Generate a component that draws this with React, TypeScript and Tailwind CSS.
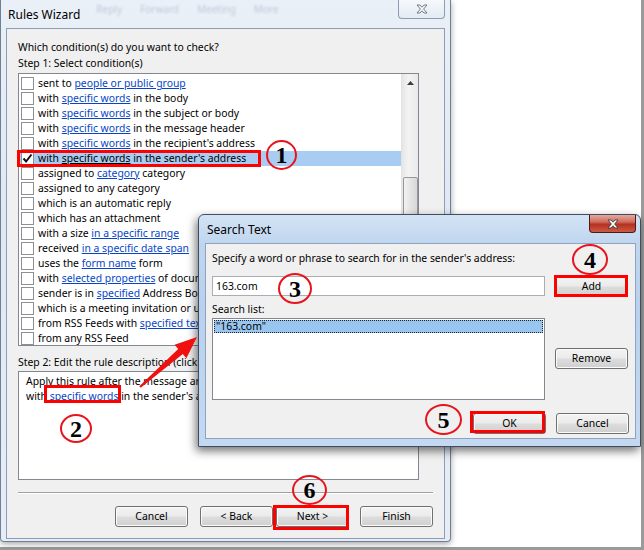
import React from "react";

type Seg = { t: string; link?: boolean };

const conditions: { segs: Seg[]; checked?: boolean }[] = [
  { segs: [{ t: "sent to " }, { t: "people or public group", link: true }] },
  { segs: [{ t: "with " }, { t: "specific words", link: true }, { t: " in the body" }] },
  { segs: [{ t: "with " }, { t: "specific words", link: true }, { t: " in the subject or body" }] },
  { segs: [{ t: "with " }, { t: "specific words", link: true }, { t: " in the message header" }] },
  { segs: [{ t: "with " }, { t: "specific words", link: true }, { t: " in the recipient's address" }] },
  { segs: [{ t: "with " }, { t: "specific words", link: true }, { t: " in the sender's address" }], checked: true },
  { segs: [{ t: "assigned to " }, { t: "category", link: true }, { t: " category" }] },
  { segs: [{ t: "assigned to any category" }] },
  { segs: [{ t: "which is an automatic reply" }] },
  { segs: [{ t: "which has an attachment" }] },
  { segs: [{ t: "with a size " }, { t: "in a specific range", link: true }] },
  { segs: [{ t: "received " }, { t: "in a specific date span", link: true }] },
  { segs: [{ t: "uses the " }, { t: "form name", link: true }, { t: " form" }] },
  { segs: [{ t: "with " }, { t: "selected properties", link: true }, { t: " of documents or forms" }] },
  { segs: [{ t: "sender is in " }, { t: "specified", link: true }, { t: " Address Book" }] },
  { segs: [{ t: "which is a meeting invitation or update" }] },
  { segs: [{ t: "from RSS Feeds with " }, { t: "specified text", link: true }, { t: " in the title" }] },
  { segs: [{ t: "from any RSS Feed" }] },
];

function Btn({ label, className = "" }: { label: string; className?: string }) {
  return (
    <div
      className={`h-[21px] w-[73px] shrink-0 rounded-[3px] border border-[#707070] bg-[linear-gradient(#f3f3f3_0%,#ebebeb_48%,#dddddd_52%,#cfcfcf_100%)] shadow-[inset_0_0_0_1px_#fbfbfb] flex items-center justify-center text-black ${className}`}
    >
      {label}
    </div>
  );
}

function CloseGlyph({ fill, stroke }: { fill: string; stroke: string }) {
  return (
    <svg width="12" height="10" viewBox="0 0 12 10">
      <path
        d="M1 1h3l2 2.2L8 1h3L7.6 5 11 9H8L6 6.8 4 9H1l3.4-4z"
        fill={fill}
        stroke={stroke}
        strokeWidth="0.9"
        strokeLinejoin="round"
      />
    </svg>
  );
}

function Circle({ n, className }: { n: string; className: string }) {
  return (
    <div
      className={`absolute rounded-[50%] border-2 border-[#e8141c] flex items-center justify-center font-['Liberation_Serif',serif] text-[24px] font-semibold text-black leading-none ${className}`}
    >
      {n}
    </div>
  );
}

function Box({ className }: { className: string }) {
  return <div className={`absolute border-[3px] border-[#ff0000] ${className}`} />;
}

function Check() {
  return (
    <svg width="11" height="11" viewBox="0 0 11 11">
      <path d="M1.5 5.5l2.6 3L9.5 1.5" fill="none" stroke="#111" strokeWidth="2" />
    </svg>
  );
}

function RulesWizard() {
  return (
    <div className="w-[451px] h-[542px] flex flex-col bg-[linear-gradient(180deg,#eaf0f7_0%,#dfe8f3_40%,#e6edf6_100%)] border-l border-b border-r border-[#6f7f94] rounded-b-[4px] shadow-[0_2px_6px_rgba(0,0,0,0.35)]">
      {/* title bar */}
      <div className="h-[28px] flex items-start shrink-0">
        <div className="pl-[7px] pt-[6px] text-[12px] text-black">Rules Wizard</div>
        <div className="flex gap-[18px] pl-[16px] pt-[2px] text-[10px] text-[#aab9cf] blur-[1px] opacity-70">
          <span>Reply</span>
          <span>Forward</span>
          <span>Meeting</span>
          <span>More</span>
        </div>
        <div className="ml-auto mr-[5px] w-[47px] h-[19px] rounded-b-[4px] border border-t-0 border-[#8d9cb1] bg-[linear-gradient(#f6f9fc,#e3eaf3)] flex items-center justify-center">
          <CloseGlyph fill="#f4f6f8" stroke="#6a6f77" />
        </div>
      </div>
      {/* client area */}
      <div className="flex-1 mx-[5px] mb-[2px] border border-[#8d9db3] bg-[#f0f0f0] flex flex-col pl-[11px] pt-[10px]">
        <div className="h-[16px] leading-[16px]">Which condition(s) do you want to check?</div>
        <div className="h-[16px] leading-[16px]">Step 1: Select condition(s)</div>
        <div className="mt-[2px] w-[401px] h-[273px] border border-[#828790] bg-white flex overflow-hidden">
          <div className="w-[382px] pt-[2px] flex flex-col">
            {conditions.map((c, i) => (
              <div
                key={i}
                className={`h-[15px] shrink-0 flex items-center pl-[2px] whitespace-nowrap ${c.checked ? "bg-[#a9cdf2]" : ""}`}
              >
                <div className="w-[13px] h-[13px] border border-[#8e8f8f] bg-white flex items-center justify-center shrink-0">
                  {c.checked && <Check />}
                </div>
                <div className="ml-[4px] leading-[15px]">
                  {c.segs.map((s, j) =>
                    s.link ? (
                      <span key={j} className={`underline ${c.checked ? "text-black" : "text-[#0645c8]"}`}>
                        {s.t}
                      </span>
                    ) : (
                      <span key={j}>{s.t}</span>
                    )
                  )}
                </div>
              </div>
            ))}
          </div>
          {/* scrollbar */}
          <div className="w-[17px] ml-auto border-l border-[#e2e2e2] bg-[linear-gradient(90deg,#e6e6e6,#f3f3f3_40%,#eaeaea)] flex flex-col items-center">
            <div className="h-[17px] w-full flex items-center justify-center">
              <svg width="7" height="4" viewBox="0 0 7 4">
                <path d="M0 4L3.5 0L7 4z" fill="#3c3c3c" />
              </svg>
            </div>
            <div className="mt-[86px] w-[15px] h-[60px] rounded-[2px] border border-[#979797] bg-[linear-gradient(90deg,#f3f3f3,#e4e4e4_50%,#d7d7d7)]" />
          </div>
        </div>
        <div className="mt-[8px] h-[16px] leading-[16px] whitespace-nowrap">
          Step 2: Edit the rule description (click an underlined value)
        </div>
        <div className="mt-[1px] w-[401px] h-[109px] border border-[#828790] bg-white pl-[7px] pt-[2px]">
          <div className="h-[15px] leading-[15px]">Apply this rule after the message arrives</div>
          <div className="h-[15px] leading-[15px]">
            with <span className="underline text-[#0645c8]">specific words</span> in the sender's address
          </div>
        </div>
        <div className="mt-[12px] w-[415px] h-[2px] border-t border-[#a0a0a0] border-b border-b-white" />
        <div className="mt-[12px] flex">
          <Btn label="Cancel" className="ml-[97px]" />
          <Btn label="< Back" className="ml-[12px]" />
          <Btn label="Next >" className="ml-[3px]" />
          <Btn label="Finish" className="ml-[11px]" />
        </div>
      </div>
    </div>
  );
}

function SearchDialog() {
  return (
    <div className="absolute left-[198px] top-[214px] w-[443px] h-[233px] flex flex-col rounded-t-[6px] border border-[#3e4e62] bg-[linear-gradient(180deg,#d3e3f5_0%,#c0d6ef_12%,#b9d1ee_40%,#c4d9f1_100%)] shadow-[-2px_4px_10px_rgba(0,0,0,0.55)]">
      <div className="h-[28px] flex items-start shrink-0">
        <div className="pl-[8px] pt-[6px] text-[12px] text-black">Search Text</div>
        <div className="ml-auto mr-[4px] w-[47px] h-[18px] rounded-b-[4px] border border-t-0 border-[#4b1a14] bg-[linear-gradient(#e6a89e_0%,#cf6e5e_40%,#b6321f_55%,#c95a44_100%)] flex items-center justify-center">
          <CloseGlyph fill="#ffffff" stroke="#3b3b3b" />
        </div>
      </div>
      <div className="flex-1 ml-[6px] mr-[4px] mb-[7px] border border-[#8ea3bd] bg-[#f0f0f0] pl-[6px] pt-[6px] flex flex-col">
        <div className="h-[16px] leading-[16px] whitespace-nowrap">
          Specify a word or phrase to search for in the sender's address:
        </div>
        <div className="mt-[10px] flex">
          <div className="w-[333px] h-[20px] border border-[#abadb3] bg-white pl-[3px] leading-[18px]">163.com</div>
          <Btn label="Add" className="ml-[10px] h-[20px]" />
        </div>
        <div className="mt-[4px] h-[16px] leading-[16px]">Search list:</div>
        <div className="mt-[1px] flex">
          <div className="w-[333px] h-[82px] border border-[#828790] bg-white p-[1px]">
            <div className="h-[13px] border border-dotted border-[#222] bg-[#99c6f0] pl-[1px] leading-[11px]">"163.com"</div>
          </div>
          <div className="ml-[10px] pt-[30px]">
            <Btn label="Remove" className="h-[20px]" />
          </div>
        </div>
        <div className="mt-[13px] flex">
          <Btn label="OK" className="ml-[261px]" />
          <Btn label="Cancel" className="ml-[10px]" />
        </div>
      </div>
    </div>
  );
}

export default function App() {
  return (
    <div className="relative w-[644px] h-[550px] bg-[#9a9a9a] overflow-hidden font-['Noto_Sans',sans-serif] text-[10.4px] text-black">
      <div className="w-[641px] h-[547px] bg-white relative">
        <RulesWizard />
        <SearchDialog />

        <svg className="absolute left-0 top-0 pointer-events-none" width="644" height="550">
          <polygon
            points="139.3,386.2 140.7,387.8 182.8,354.1 186.4,358.3 197,337 174.6,344.7 178.2,348.9"
            fill="#f01010"
          />
        </svg>

        <Box className="left-[17px] top-[150px] w-[244px] h-[17px]" />
        <Box className="left-[44px] top-[385px] w-[77px] h-[18px]" />
        <Box className="left-[554px] top-[275px] w-[74px] h-[22px]" />
        <Box className="left-[470px] top-[411px] w-[75px] h-[22px]" />
        <Box className="left-[273px] top-[505px] w-[76px] h-[25px]" />

        <Circle n="1" className="left-[266px] top-[140px] w-[31px] h-[30px]" />
        <Circle n="2" className="left-[60px] top-[414px] w-[32px] h-[29px]" />
        <Circle n="3" className="left-[278px] top-[273px] w-[34px] h-[31px]" />
        <Circle n="4" className="left-[572px] top-[244px] w-[36px] h-[31px]" />
        <Circle n="5" className="left-[425px] top-[404px] w-[37px] h-[31px]" />
        <Circle n="6" className="left-[292px] top-[475px] w-[35px] h-[30px]" />
      </div>
    </div>
  );
}
